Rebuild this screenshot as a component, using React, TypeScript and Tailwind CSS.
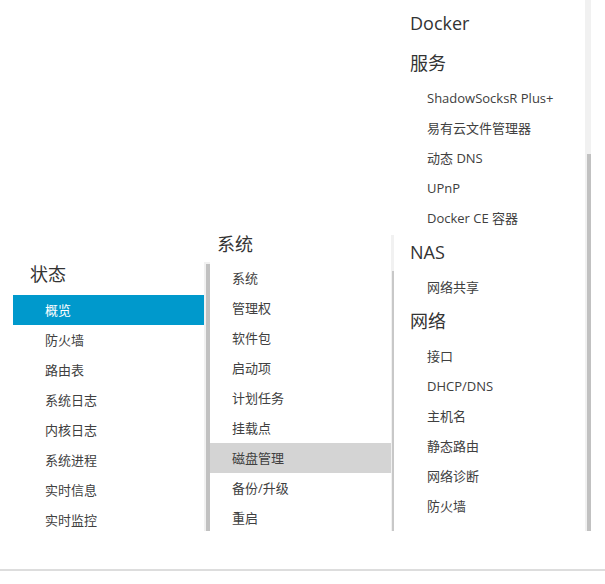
import React from 'react';

type Entry = { label: string; kind?: 'head'; state?: 'active' | 'hover'; h?: string };

const statusMenu: Entry[] = [
  { label: '概览', state: 'active' },
  { label: '防火墙' },
  { label: '路由表' },
  { label: '系统日志' },
  { label: '内核日志' },
  { label: '系统进程' },
  { label: '实时信息' },
  { label: '实时监控' },
];

const systemMenu: Entry[] = [
  { label: '系统' },
  { label: '管理权' },
  { label: '软件包' },
  { label: '启动项' },
  { label: '计划任务' },
  { label: '挂载点' },
  { label: '磁盘管理', state: 'hover' },
  { label: '备份/升级' },
  { label: '重启' },
];

const mainMenu: Entry[] = [
  { label: 'Docker', kind: 'head', h: 'h-10 leading-10' },
  { label: '服务', kind: 'head', h: 'h-10 leading-10' },
  { label: 'ShadowSocksR Plus+' },
  { label: '易有云文件管理器' },
  { label: '动态 DNS' },
  { label: 'UPnP' },
  { label: 'Docker CE 容器' },
  { label: 'NAS', kind: 'head', h: 'h-[39px] leading-[39px]' },
  { label: '网络共享' },
  { label: '网络', kind: 'head', h: 'h-[39px] leading-[39px]' },
  { label: '接口' },
  { label: 'DHCP/DNS' },
  { label: '主机名' },
  { label: '静态路由' },
  { label: '网络诊断' },
  { label: '防火墙' },
];

function Item({ entry, indent }: { entry: Entry; indent: string }) {
  const tone =
    entry.state === 'active'
      ? 'bg-[#0099cc] text-white'
      : entry.state === 'hover'
        ? 'bg-[#d4d4d4] text-[#404040]'
        : 'text-[#404040]';
  return (
    <div className={`h-[30px] shrink-0 whitespace-nowrap text-[13px] leading-[30px] ${indent} ${tone}`}>
      {entry.label}
    </div>
  );
}

export default function App() {
  return (
    <div className="w-[605px] h-[584px] bg-white font-['Open_Sans','Noto_Sans_CJK_SC',sans-serif]">
      <div className="flex h-[531px] items-end pl-[13px]">
        {/* 状态 */}
        <div className="flex h-[269px] w-[197px] overflow-hidden">
          <div className="flex-1 overflow-hidden">
            <div className="h-[33px] pl-[17px] text-[18px] leading-[25px] text-[#333]">状态</div>
            {statusMenu.map((e) => (
              <Item key={e.label} entry={e} indent="pl-[32px]" />
            ))}
          </div>
          <div className="flex w-[6px] flex-col bg-[#f1f1f1] pl-[2px] pt-[2px]">
            <div className="flex-1 bg-[#c1c1c1]" />
          </div>
        </div>

        {/* 系统 */}
        <div className="flex h-[296px] w-[185px]">
          <div className="flex-1">
            <div className="-mt-[3px] mb-[3px] h-[28px] pl-[7px] text-[18px] leading-[24px] text-[#333]">系统</div>
            <div className="h-[268px] overflow-hidden">
              {systemMenu.map((e) => (
                <Item key={e.label} entry={e} indent="pl-[22px]" />
              ))}
            </div>
          </div>
          <div className="flex w-[3px] flex-col bg-[#f1f1f1] pl-[1px] pt-[36px]">
            <div className="flex-1 bg-[#c8c8c8]" />
          </div>
          <div className="w-px" />
        </div>

        {/* 主菜单 */}
        <div className="flex h-[531px] w-[196px] overflow-hidden">
          <div className="flex-1 overflow-hidden pt-[3px]">
            {mainMenu.map((e, i) =>
              e.kind === 'head' ? (
                <div key={i} className={`shrink-0 pl-[15px] text-[18px] text-[#333] ${e.h}`}>
                  {e.label}
                </div>
              ) : (
                <Item key={i} entry={e} indent="pl-[32px]" />
              )
            )}
          </div>
          <div className="flex w-[6px] flex-col bg-[#f1f1f1] pl-[2px] pt-[154px]">
            <div className="flex-1 bg-[#c1c1c1]" />
          </div>
        </div>
      </div>
      <div className="h-[38px]" />
      <div className="h-[2px] w-full bg-[#dddddd]" />
    </div>
  );
}
